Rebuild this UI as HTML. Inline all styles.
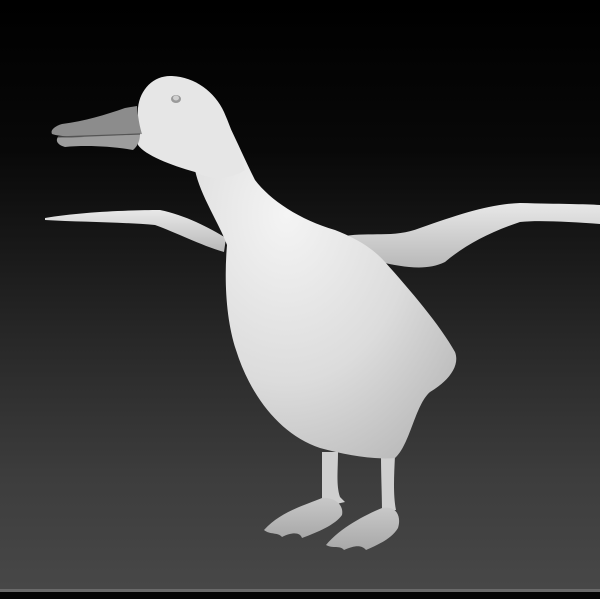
<!DOCTYPE html>
<html><head><style>
html,body{margin:0;padding:0;background:#000;}
.w{width:600px;height:599px;position:relative;overflow:hidden;background:linear-gradient(#000 0%,#080808 25%,#262626 55%,#3d3d3d 80%,#474747 98%);}
</style></head><body><div class="w">
<svg width="600" height="599" viewBox="0 0 600 599" style="position:absolute;left:0;top:0">
<defs>
<radialGradient id="b" cx="0.35" cy="0.3" r="0.8">
<stop offset="0" stop-color="#f4f4f4"/><stop offset="0.6" stop-color="#dcdcdc"/><stop offset="1" stop-color="#bdbdbd"/></radialGradient>
<linearGradient id="wg" x1="0" y1="0" x2="0" y2="1"><stop offset="0" stop-color="#e8e8e8"/><stop offset="1" stop-color="#b8b8b8"/></linearGradient>
<linearGradient id="fg" x1="0" y1="0" x2="0" y2="1"><stop offset="0" stop-color="#c8c8c8"/><stop offset="1" stop-color="#a8a8a8"/></linearGradient>
</defs>
<rect x="0" y="589" width="600" height="3" fill="#6a6a6a"/>
<rect x="0" y="592" width="600" height="7" fill="#050505"/>
<!-- left wing -->
<path d="M45,218 C80,212 130,210 160,210 C185,215 210,228 226,238 L224,252 C200,245 175,232 155,225 C120,222 80,222 45,220 Z" fill="url(#wg)"/>
<!-- right wing -->
<path d="M345,236 C370,232 395,238 420,228 C460,214 490,204 520,203 C560,204 585,204 600,205 L600,224 C570,222 540,220 520,222 C490,232 465,245 445,262 C425,272 400,266 380,262 C365,260 355,255 345,250 Z" fill="url(#wg)"/>
<!-- legs -->
<path d="M322,452 L338,452 C338,470 336,485 340,497 L345,502 L332,505 L322,500 Z" fill="#cfcfcf"/>
<path d="M381,456 L395,456 C394,475 393,495 396,510 L382,512 C382,495 381,475 381,456 Z" fill="#cfcfcf"/>
<!-- feet -->
<path d="M322,498 C305,505 280,512 264,530 C270,535 278,532 282,537 C292,532 300,532 302,538 C318,532 335,525 342,515 C344,505 335,497 322,498 Z" fill="url(#fg)"/>
<path d="M382,508 C365,515 340,528 326,545 C333,549 340,545 344,550 C355,545 362,545 366,550 C380,544 392,538 398,528 C402,515 395,505 382,508 Z" fill="url(#fg)"/>
<!-- neck + body -->
<path d="M195,170 C200,195 220,225 227,245 C224,280 226,320 236,350 C250,395 280,435 320,448 C345,455 375,460 395,458 C410,445 415,405 430,392 C450,380 460,365 455,352 C440,325 410,290 385,262 C370,245 350,236 335,230 C300,220 270,200 255,180 C240,150 228,120 220,110 Z" fill="url(#b)"/>
<!-- head -->
<path d="M138,108 C140,88 155,75 172,76 C195,77 215,92 224,112 C232,130 238,150 245,170 C230,180 210,180 195,172 C170,165 145,155 138,145 Z" fill="#e6e6e6"/>
<ellipse cx="176" cy="99" rx="5" ry="4" fill="#9a9a9a"/>
<ellipse cx="176" cy="98" rx="3" ry="2.5" fill="#d0d0d0"/>
<!-- beak -->
<path d="M125,108 L137,106 C138,118 140,128 142,134 L100,137 C80,137 60,137 52,134 C50,130 55,126 62,124 C85,121 105,115 125,108 Z" fill="#8c8c8c"/>
<path d="M58,137 C80,138 110,136 140,134 C140,140 138,146 133,150 C110,146 85,145 65,147 C58,145 55,141 58,137 Z" fill="#9d9d9d"/>
<path d="M58,137 L140,134" stroke="#555" stroke-width="1.2"/>
</svg>
</div></body></html>
